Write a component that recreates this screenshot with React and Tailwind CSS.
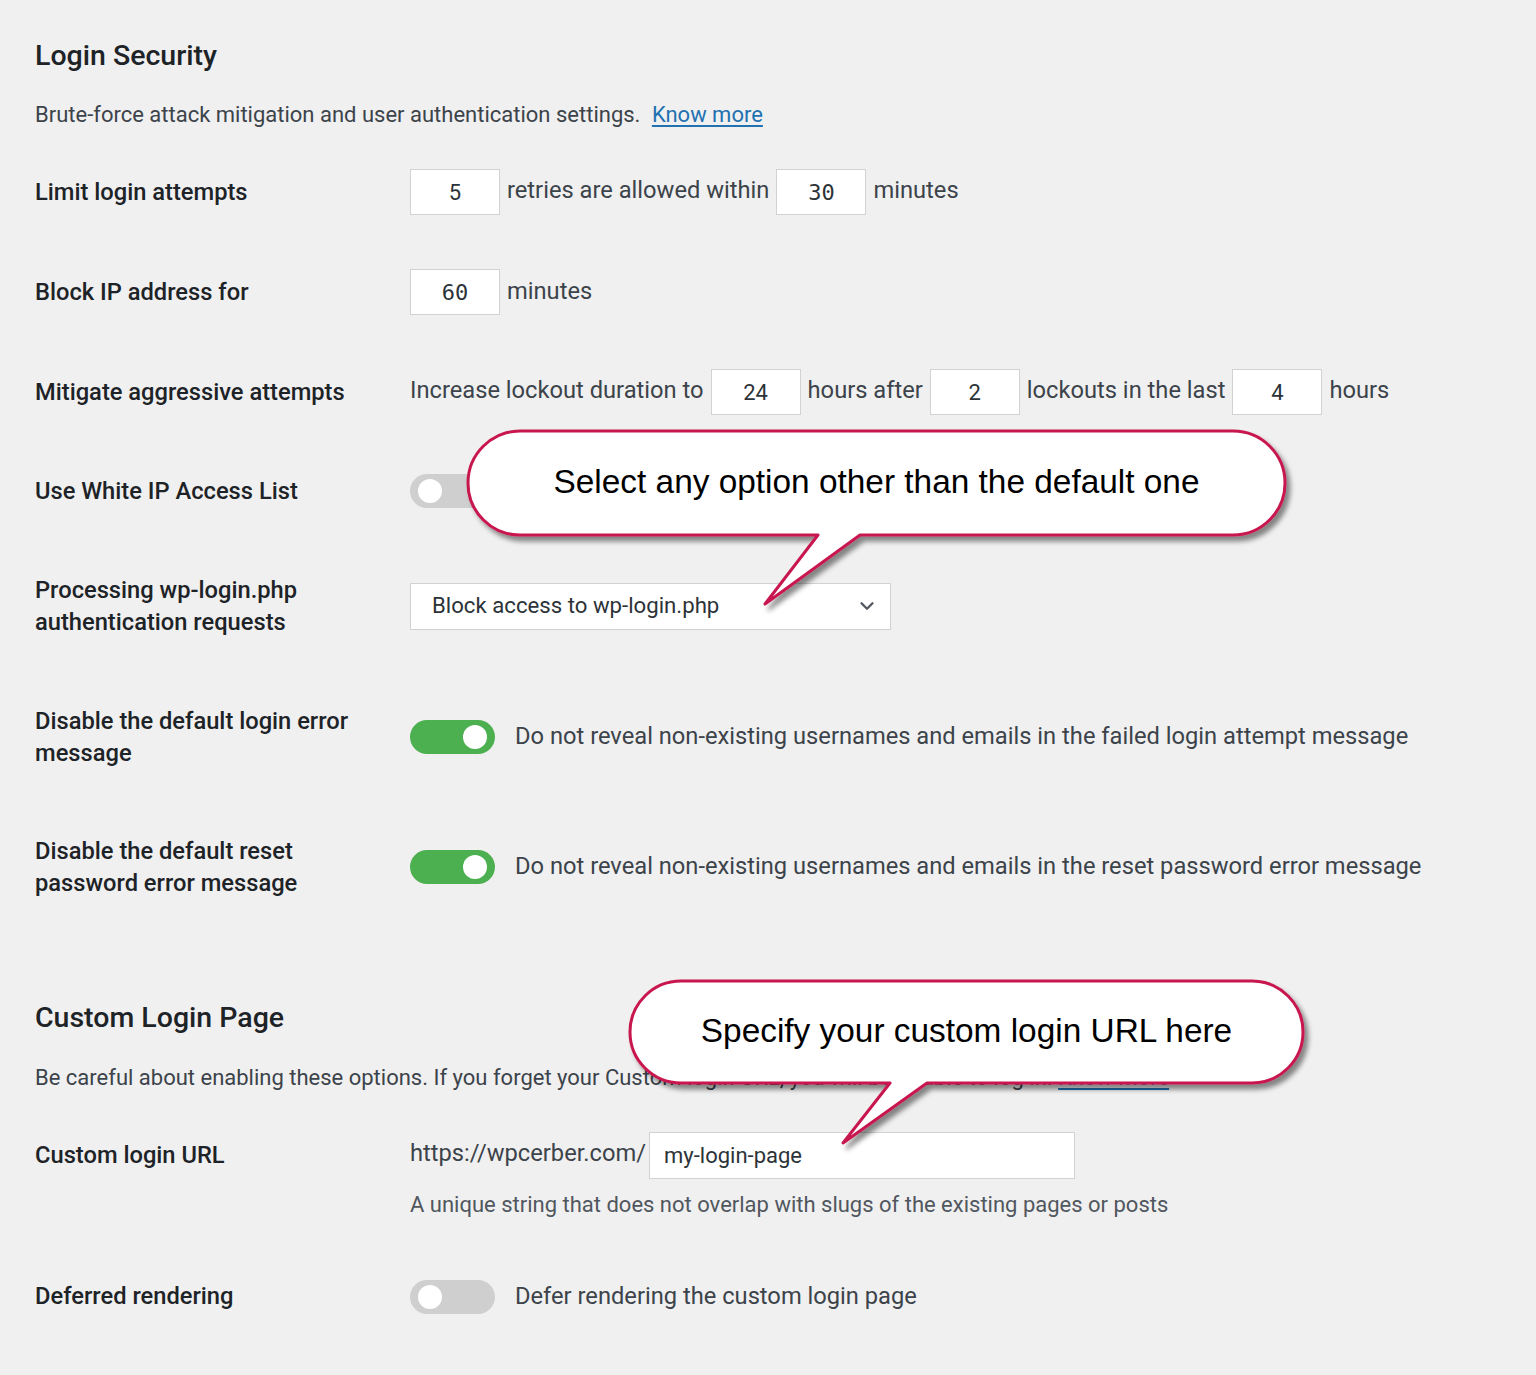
import { ChevronDown } from 'lucide-react';

function NumBox({ value, mono }) {
  return (
    <input
      readOnly
      value={value}
      className={`h-[46px] w-[90px] border border-[#d2d2d2] bg-white text-center text-[22px] text-[#2c3338] outline-none ${
        mono ? "font-['DejaVu_Sans_Mono',monospace] text-[20px]" : 'font-[Roboto,sans-serif]'
      }`}
    />
  );
}

function Toggle({ on }) {
  return (
    <div
      className={`flex h-[34px] w-[85px] shrink-0 items-center rounded-full px-[8px] ${
        on ? 'justify-end bg-[#4caf50]' : 'justify-start bg-[#cfcfcf]'
      }`}
    >
      <div className="h-[24px] w-[24px] rounded-full bg-white" />
    </div>
  );
}

function Row({ label, height, children }) {
  return (
    <div className="flex items-center" style={{ height }}>
      <div className="w-[375px] shrink-0 pr-[20px] text-[23.7px] leading-[32px] font-medium text-[#1d2327]">
        {label}
      </div>
      <div className="flex flex-1 items-center gap-[7px] text-[23.7px] text-[#3c434a]">{children}</div>
    </div>
  );
}

function Callout({ left, top, width, height, path, textTop, textLeft, textWidth, children, id }) {
  return (
    <div className="absolute" style={{ left, top, width, height }}>
      <svg width={width} height={height} className="absolute left-0 top-0">
        <defs>
          <filter id={id} x="-10%" y="-20%" width="130%" height="160%">
            <feDropShadow dx="4" dy="5" stdDeviation="2.5" floodColor="#000" floodOpacity="0.45" />
          </filter>
        </defs>
        <path d={path} fill="#fff" stroke="#c8174f" strokeWidth="3" strokeLinejoin="round" filter={`url(#${id})`} />
      </svg>
      <div
        className="absolute text-center font-['Liberation_Sans',Arial,sans-serif] text-[33.4px] leading-[40px] text-black"
        style={{ top: textTop, left: textLeft, width: textWidth }}
      >
        {children}
      </div>
    </div>
  );
}

export default function App() {
  return (
    <div className="relative h-[1375px] overflow-hidden bg-[#f0f0f0] pl-[35px] pt-[40px] font-[Roboto,sans-serif]">
      <h2 className="text-[28.5px] leading-[32px] font-medium text-[#1d2327]">Login Security</h2>
      <p className="mt-[29px] text-[22px] leading-[28px] text-[#3c434a]">
        Brute-force attack mitigation and user authentication settings.{' '}
        <a className="ml-[6px] text-[#2271b1] underline underline-offset-[3px]">Know more</a>
      </p>

      <div className="mt-[13px]">
        <Row label="Limit login attempts" height={100}>
          <NumBox value="5" />
          <span className="-mt-[3px]">retries are allowed within</span>
          <NumBox value="30" mono />
          <span className="-mt-[3px]">minutes</span>
        </Row>
        <Row label="Block IP address for" height={100}>
          <NumBox value="60" mono />
          <span>minutes</span>
        </Row>
        <Row label="Mitigate aggressive attempts" height={100}>
          <span className="-mt-[3px]">Increase lockout duration to</span>
          <NumBox value="24" />
          <span className="-mt-[3px]">hours after</span>
          <NumBox value="2" />
          <span className="-mt-[3px]">lockouts in the last</span>
          <NumBox value="4" />
          <span className="-mt-[3px]">hours</span>
        </Row>
        <Row label="Use White IP Access List" height={98}>
          <Toggle />
        </Row>
        <Row label="Processing wp-login.php authentication requests" height={132}>
          <div className="flex h-[47px] w-[481px] items-center justify-between border border-[#d2d2d2] bg-white pl-[21px] pr-[12px] text-[22.2px] text-[#2c3338]">
            <span>Block access to wp-login.php</span>
            <ChevronDown size={22} strokeWidth={2.5} className="text-[#50575e]" />
          </div>
        </Row>
        <Row label="Disable the default login error message" height={130}>
          <Toggle on />
          <span className="ml-[13px]">
            Do not reveal non-existing usernames and emails in the failed login attempt message
          </span>
        </Row>
        <Row label="Disable the default reset password error message" height={130}>
          <Toggle on />
          <span className="ml-[13px]">
            Do not reveal non-existing usernames and emails in the reset password error message
          </span>
        </Row>
      </div>

      <h2 className="mt-[70px] text-[28.5px] leading-[32px] font-medium text-[#1d2327]">Custom Login Page</h2>
      <p className="mt-[30px] text-[22px] leading-[28px] text-[#3c434a]">
        Be careful about enabling these options. If you forget your Custom login URL, you will be unable to log in.{' '}
        <a className="text-[#2271b1] underline underline-offset-[3px]">Know more</a>
      </p>

      <div className="mt-[40px] flex items-center">
        <div className="w-[375px] shrink-0 text-[23.7px] font-medium text-[#1d2327]">Custom login URL</div>
        <div className="flex items-center gap-[3px] text-[23.7px] text-[#3c434a]">
          <span className="-mt-[4px]">https://wpcerber.com/</span>
          <div className="flex h-[47px] w-[426px] items-center border border-[#d2d2d2] bg-white px-[14px] text-[22px] text-[#2c3338]">
            my-login-page
          </div>
        </div>
      </div>
      <p className="mt-[12px] pl-[375px] text-[22px] leading-[28px] text-[#50575e]">
        A unique string that does not overlap with slugs of the existing pages or posts
      </p>

      <div className="mt-[60px] flex items-center">
        <div className="w-[375px] shrink-0 text-[23.7px] font-medium text-[#1d2327]">Deferred rendering</div>
        <Toggle />
        <span className="ml-[20px] text-[23.7px] text-[#3c434a]">Defer rendering the custom login page</span>
      </div>

      <Callout
        id="shadow1"
        left={460}
        top={425}
        width={840}
        height={190}
        path="M60 6 H773 A52 52 0 0 1 773 110 H400 L305 179 L358 110 H60 A52 52 0 0 1 60 6 Z"
        textTop={37}
        textLeft={8}
        textWidth={817}
      >
        Select any option other than the default one
      </Callout>

      <Callout
        id="shadow2"
        left={622}
        top={975}
        width={700}
        height={190}
        path="M59 6 H630 A51 51 0 0 1 630 108 H305 L221 168 L268 108 H59 A51 51 0 0 1 59 6 Z"
        textTop={36}
        textLeft={8}
        textWidth={673}
      >
        Specify your custom login URL here
      </Callout>
    </div>
  );
}
